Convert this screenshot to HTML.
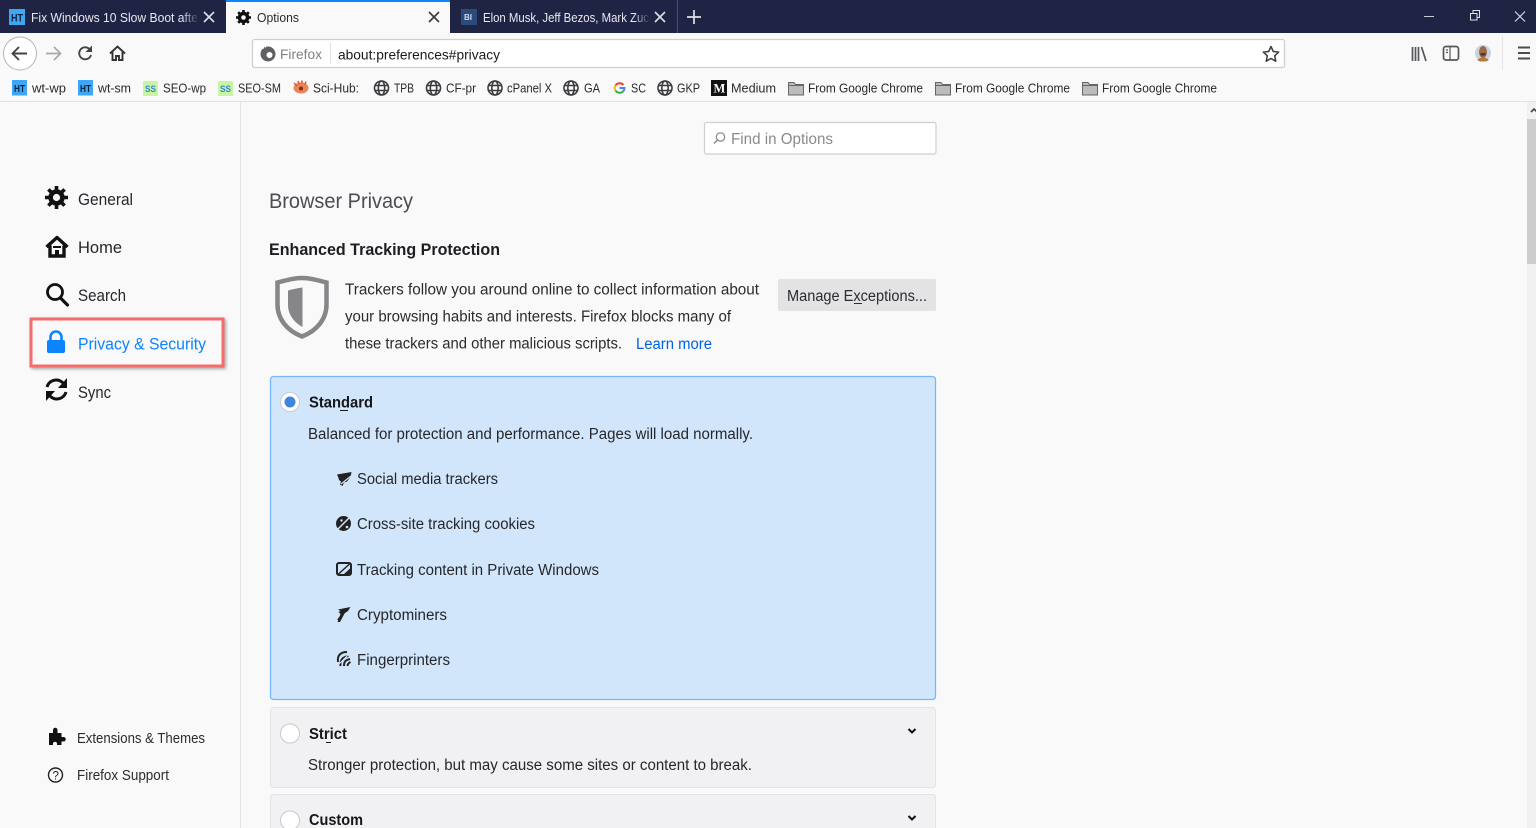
<!DOCTYPE html>
<html><head><meta charset="utf-8"><title>Options</title>
<style>
html,body{margin:0;padding:0;width:1536px;height:828px;overflow:hidden;background:#f9f9fa}
svg{display:block;position:absolute;left:0;top:0;filter:blur(.25px)}
text{font-family:"Liberation Sans",sans-serif;white-space:pre}
</style></head><body>
<svg width="1536" height="828" viewBox="0 0 1536 828" xmlns="http://www.w3.org/2000/svg">
<defs>
<linearGradient id="f1" x1="0" x2="1"><stop offset="0" stop-color="#1f2445" stop-opacity="0"/><stop offset="1" stop-color="#1f2445"/></linearGradient>
<filter id="sh" x="-10%" y="-20%" width="120%" height="140%"><feDropShadow dx="1.5" dy="1.5" stdDeviation="1.5" flood-color="#000" flood-opacity=".35"/></filter>
<g id="globe" fill="none" stroke="#3c3c40" stroke-width="1.600"><circle cx="0" cy="0" r="7"/><ellipse cx="0" cy="0" rx="3.200" ry="7"/><path d="M-6.600-2.500H6.600M-6.600 2.500H6.600"/></g>
<g id="folder"><path d="M.5 2.500h5.500l1.500 2h8v10.500h-15z" fill="#bcbcbc" stroke="#666"/><path d="M.5 5.500h15" stroke="#666"/></g>
<path id="x" d="M-5-5 5 5M5-5-5 5" fill="none" stroke-width="1.600"/>
</defs>

<rect width="1536" height="828" fill="#f9f9fa"/>

<!-- tab strip -->
<rect width="1536" height="33" fill="#1f2445"/>
<rect x="9" y="9" width="16" height="16" fill="#3fa5f5"/>
<text x="11" y="21.500" font-size="11" font-weight="bold" fill="#0e2038" textLength="12" lengthAdjust="spacingAndGlyphs">HT</text>
<text x="31" y="22" font-size="12.500" fill="#e8e9ee" textLength="167" lengthAdjust="spacingAndGlyphs">Fix Windows 10 Slow Boot afte</text>
<rect x="182" y="6" width="17" height="22" fill="url(#f1)"/>
<use href="#x" x="209" y="17" stroke="#dfe0e6"/>
<rect x="226" y="0" width="224" height="33" fill="#f9f9fa"/>
<rect x="226" y="0" width="224" height="2" fill="#0a84ff"/>
<g transform="translate(243.500 17.500)"><circle r="4.500" fill="none" stroke="#111" stroke-width="2.600"/><path d="M0-7.500V7.500M-7.500 0H7.500M-5.300-5.300 5.300 5.300M5.300-5.300-5.300 5.300" stroke="#111" stroke-width="2.600"/><circle r="2.300" fill="#f9f9fa"/></g>
<text x="257" y="22" font-size="12.500" fill="#2a2a2e" textLength="42" lengthAdjust="spacingAndGlyphs">Options</text>
<use href="#x" x="434" y="17" stroke="#38383d"/>
<rect x="461" y="9" width="16" height="16" fill="#2c4a7c"/>
<text x="464" y="20" font-size="8" font-weight="bold" fill="#cfdcf0">BI</text>
<text x="483" y="22" font-size="12.500" fill="#e8e9ee" textLength="166" lengthAdjust="spacingAndGlyphs">Elon Musk, Jeff Bezos, Mark Zuc</text>
<rect x="634" y="6" width="16" height="22" fill="url(#f1)"/>
<use href="#x" x="660" y="17" stroke="#dfe0e6"/>
<rect x="677" y="0" width="1" height="33" fill="#4a4e6c"/>
<path d="M694 10v14M687 17h14" stroke="#dfe0e6" stroke-width="1.700"/>
<path d="M1424 16.500h10" stroke="#c9cbd6"/>
<path d="M1470.500 13.500h6.500v6.500h-6.500zM1473 13v-2.500h6.500v7h-2.500" fill="none" stroke="#dfe0e6"/>
<path d="M1515 11.500l10 10M1525 11.500l-10 10" stroke="#dfe0e6" stroke-width="1.100"/>

<!-- nav toolbar -->
<circle cx="20" cy="53.500" r="16.500" fill="#fff" stroke="#b5b5b7"/>
<path d="M27 53.500H13M19 47l-6.500 6.500L19 60" fill="none" stroke="#444" stroke-width="1.900"/>
<path d="M46 53.500H60M54 47l6.500 6.500L54 60" fill="none" stroke="#a8a8ab" stroke-width="1.700"/>
<path d="M91 55a6 6 0 1 1-1.800-6.200L91 50.500" fill="none" stroke="#444" stroke-width="1.900"/><path d="M92 45.500v6.500h-6.500z" fill="#444"/>
<path d="M110 53.500l7.500-7 7.500 7M112.500 52v8h3.500v-4h3v4h3.500v-8" fill="none" stroke="#333" stroke-width="1.900"/>
<rect x="252.500" y="39.500" width="1032" height="28" rx="2" fill="#fff" stroke="#d0d0d2" stroke-width="1.300"/>
<circle cx="268" cy="54" r="7.500" fill="#606064"/><circle cx="269.500" cy="55" r="3" fill="#fff"/><path d="M260 47l5 3 1-3.500-3-1.500z" fill="#fff"/><path d="M264.500 46.500l-1.500 4 3-1z" fill="#606064"/>
<text x="280" y="59" font-size="14" fill="#808084" textLength="42" lengthAdjust="spacingAndGlyphs">Firefox</text>
<rect x="330" y="43" width="1" height="21" fill="#e0e0e2"/>
<text x="338" y="59.500" font-size="14" fill="#1a1a1e" textLength="162" lengthAdjust="spacingAndGlyphs">about:preferences#privacy</text>
<path d="M1271 46.500l2.300 5 5.400.6-4 3.700 1.100 5.400-4.800-2.700-4.800 2.700 1.100-5.400-4-3.700 5.400-.6z" fill="none" stroke="#3c3c40" stroke-width="1.500" stroke-linejoin="round"/>
<path d="M1412.500 47v14M1415.500 47v14M1418.500 47v14M1421.500 47l4.500 14" stroke="#55555a" stroke-width="1.700" fill="none"/>
<rect x="1443.500" y="46.500" width="15" height="13.500" rx="2.500" fill="none" stroke="#55555a" stroke-width="1.700"/><path d="M1450 47v13M1446 50h2M1446 52.500h2" stroke="#55555a" stroke-width="1.200"/>
<circle cx="1483" cy="53" r="8" fill="#c9d3dc"/><ellipse cx="1483" cy="52" rx="4" ry="6" fill="#9a6a4e"/><path d="M1477 60q6-5 12 0l-3 1.500h-6z" fill="#b57a3e"/><rect x="1480.500" y="53" width="5" height="2.500" fill="#5a3526"/>
<rect x="1502" y="36" width="1" height="34" fill="#e4e4e6"/>
<path d="M1518 47.500h12M1518 53h12M1518 58.500h12" stroke="#4a4a4f" stroke-width="2"/>

<!-- bookmarks -->
<rect x="0" y="101" width="1536" height="1" fill="#e1e1e3"/>
<rect x="12" y="80" width="15" height="15.500" fill="#3fa5f5"/><text x="14" y="92" font-size="10" font-weight="bold" fill="#0e2038" textLength="11" lengthAdjust="spacingAndGlyphs">HT</text>
<text x="32" y="92.500" font-size="12.500" fill="#2a2a2e" textLength="34" lengthAdjust="spacingAndGlyphs">wt-wp</text>
<rect x="78" y="80" width="15" height="15.500" fill="#3fa5f5"/><text x="80" y="92" font-size="10" font-weight="bold" fill="#0e2038" textLength="11" lengthAdjust="spacingAndGlyphs">HT</text>
<text x="98" y="92.500" font-size="12.500" fill="#2a2a2e" textLength="33" lengthAdjust="spacingAndGlyphs">wt-sm</text>
<rect x="143" y="81" width="15" height="15" fill="#c7f5a0"/><text x="145" y="92" font-size="9" font-weight="bold" fill="#3a86d0" textLength="11" lengthAdjust="spacingAndGlyphs">SS</text>
<text x="163" y="92.500" font-size="12.500" fill="#2a2a2e" textLength="43" lengthAdjust="spacingAndGlyphs">SEO-wp</text>
<rect x="218" y="81" width="15" height="15" fill="#c7f5a0"/><text x="220" y="92" font-size="9" font-weight="bold" fill="#3a86d0" textLength="11" lengthAdjust="spacingAndGlyphs">SS</text>
<text x="238" y="92.500" font-size="12.500" fill="#2a2a2e" textLength="43" lengthAdjust="spacingAndGlyphs">SEO-SM</text>
<ellipse cx="301" cy="88" rx="7.500" ry="5.500" fill="#e8855a"/><path d="M294 83l3 3M298 81l1 3M302 80.500v3M306 81.500l-1 3" stroke="#d9572f" stroke-width="1.500"/><circle cx="301" cy="88.500" r="2" fill="#8c2a14"/>
<text x="313" y="92.500" font-size="12.500" fill="#2a2a2e" textLength="46" lengthAdjust="spacingAndGlyphs">Sci-Hub:</text>
<use href="#globe" x="381.500" y="88"/><text x="394" y="92.500" font-size="12.500" fill="#2a2a2e" textLength="20" lengthAdjust="spacingAndGlyphs">TPB</text>
<use href="#globe" x="433.500" y="88"/><text x="446" y="92.500" font-size="12.500" fill="#2a2a2e" textLength="30" lengthAdjust="spacingAndGlyphs">CF-pr</text>
<use href="#globe" x="495" y="88"/><text x="507" y="92.500" font-size="12.500" fill="#2a2a2e" textLength="45" lengthAdjust="spacingAndGlyphs">cPanel X</text>
<use href="#globe" x="571" y="88"/><text x="584" y="92.500" font-size="12.500" fill="#2a2a2e" textLength="16" lengthAdjust="spacingAndGlyphs">GA</text>
<g fill="none" stroke-width="2"><path d="M623.500 85a5 5 0 0 0-8 .5" stroke="#ea4335"/><path d="M615.500 85.500a5 5 0 0 0 0 5" stroke="#fbbc05"/><path d="M615.500 90.500a5 5 0 0 0 8 .5" stroke="#34a853"/><path d="M623.500 91a5 5 0 0 0 1-3h-5" stroke="#4285f4"/></g>
<text x="631" y="92.500" font-size="12.500" fill="#2a2a2e" textLength="15" lengthAdjust="spacingAndGlyphs">SC</text>
<use href="#globe" x="665" y="88"/><text x="677" y="92.500" font-size="12.500" fill="#2a2a2e" textLength="23" lengthAdjust="spacingAndGlyphs">GKP</text>
<rect x="711" y="80" width="16" height="16" fill="#111"/><text x="713.500" y="92.500" font-size="12.500" font-weight="bold" fill="#fff" style="font-family:'Liberation Serif',serif">M</text>
<text x="731" y="92.500" font-size="12.500" fill="#2a2a2e" textLength="45" lengthAdjust="spacingAndGlyphs">Medium</text>
<use href="#folder" x="788" y="80"/><text x="808" y="92.500" font-size="12.500" fill="#2a2a2e" textLength="115" lengthAdjust="spacingAndGlyphs">From Google Chrome</text>
<use href="#folder" x="935" y="80"/><text x="955" y="92.500" font-size="12.500" fill="#2a2a2e" textLength="115" lengthAdjust="spacingAndGlyphs">From Google Chrome</text>
<use href="#folder" x="1082" y="80"/><text x="1102" y="92.500" font-size="12.500" fill="#2a2a2e" textLength="115" lengthAdjust="spacingAndGlyphs">From Google Chrome</text>

<!-- sidebar -->
<rect x="240" y="102" width="1" height="726" fill="#e3e3e5"/>
<g transform="translate(56.500 197.500)"><circle r="6.500" fill="none" stroke="#111" stroke-width="3.400"/><path d="M0-11.500V11.500M-11.500 0H11.500M-8.100-8.100 8.100 8.100M8.100-8.100-8.100 8.100" stroke="#111" stroke-width="3.600"/><circle r="3.600" fill="#f9f9fa"/></g>
<text x="78" y="205" font-size="17" fill="#26262b" textLength="55" lengthAdjust="spacingAndGlyphs">General</text>
<path d="M46.500 247l10.500-9.500 10.500 9.500" fill="none" stroke="#111" stroke-width="3.400" stroke-linejoin="round"/>
<path d="M50 245.500v10.500h14v-10.500" fill="none" stroke="#111" stroke-width="3.400"/><path d="M55 256v-6h4v6" fill="#111"/><path d="M53 246h8v2h-8z" fill="#111"/>
<text x="78" y="253" font-size="17" fill="#26262b" textLength="44" lengthAdjust="spacingAndGlyphs">Home</text>
<circle cx="55" cy="292" r="7.500" fill="none" stroke="#111" stroke-width="2.800"/><path d="M60.500 298l7 7" stroke="#111" stroke-width="3.200" stroke-linecap="round"/>
<text x="78" y="301" font-size="17" fill="#26262b" textLength="48" lengthAdjust="spacingAndGlyphs">Search</text>
<rect x="31" y="319" width="192" height="47" fill="#f9f9fa" stroke="#f56d6b" stroke-width="3" filter="url(#sh)"/>
<rect x="47" y="340" width="18" height="13" rx="2" fill="#0a84ff"/><path d="M50.500 341v-4a5.500 5.500 0 0 1 11 0v4" fill="none" stroke="#0a84ff" stroke-width="2.600"/>
<text x="78" y="349.500" font-size="17" fill="#0a84ff" textLength="128" lengthAdjust="spacingAndGlyphs">Privacy &amp; Security</text>
<g fill="none" stroke="#111" stroke-width="3"><path d="M47 387a9.500 9.500 0 0 1 15.500-4.500L65 385"/><path d="M66 392a9.500 9.500 0 0 1-15.500 4.500L48 394"/></g>
<path d="M67 378v10h-9zM46 401v-10h9z" fill="#111"/>
<text x="78" y="398" font-size="17" fill="#26262b" textLength="33" lengthAdjust="spacingAndGlyphs">Sync</text>
<path d="M49 733h4v-3a2.200 2.200 0 0 1 4.500 0v3h4v4h2a2 2 0 0 1 0 4.500h-2v3.500h-4.500v-2a2.200 2.200 0 0 0-4 0v2h-4z" fill="#111"/>
<text x="77" y="743" font-size="14.500" fill="#2c2c31" textLength="128" lengthAdjust="spacingAndGlyphs">Extensions &amp; Themes</text>
<circle cx="55.500" cy="775" r="7" fill="none" stroke="#222" stroke-width="1.400"/><text x="52.500" y="779.500" font-size="11.500" fill="#222">?</text>
<text x="77" y="780" font-size="14.500" fill="#2c2c31" textLength="92" lengthAdjust="spacingAndGlyphs">Firefox Support</text>

<!-- search -->
<rect x="704.500" y="122.500" width="231.500" height="31.500" rx="2" fill="#fff" stroke="#cfcfd1" stroke-width="1.200"/>
<circle cx="720.500" cy="137" r="4.200" fill="none" stroke="#85858a" stroke-width="1.200"/><path d="M717.500 140l-3.500 3.500" stroke="#85858a" stroke-width="1.300"/>
<text x="731" y="144" font-size="15.500" fill="#8a8a90" textLength="102" lengthAdjust="spacingAndGlyphs">Find in Options</text>

<!-- headings -->
<text x="269" y="208" font-size="21" fill="#4c4c52" textLength="144" lengthAdjust="spacingAndGlyphs">Browser Privacy</text>
<text x="269" y="255" font-size="17" font-weight="bold" fill="#1d1d22" textLength="231" lengthAdjust="spacingAndGlyphs">Enhanced Tracking Protection</text>

<!-- shield -->
<path d="M302 278c8 0 15 2 24.500 4.500v22c0 14-9 26-24.500 32-15.500-6-24.500-18-24.500-32v-22c9.500-2.500 16.500-4.500 24.500-4.500z" fill="none" stroke="#868689" stroke-width="4.500"/>
<path d="M302.500 287.500v39.500c-9-5-14.500-13-14.500-22v-14.500c5-1.300 9.500-2.500 14.500-3z" fill="#868689"/>

<!-- intro -->
<g font-size="15.500" fill="#2b2b30">
<text x="345" y="294.500" textLength="414" lengthAdjust="spacingAndGlyphs">Trackers follow you around online to collect information about</text>
<text x="345" y="321.500" textLength="386" lengthAdjust="spacingAndGlyphs">your browsing habits and interests. Firefox blocks many of</text>
<text x="345" y="348.500" textLength="277" lengthAdjust="spacingAndGlyphs">these trackers and other malicious scripts.</text>
<text x="636" y="349" textLength="76" lengthAdjust="spacingAndGlyphs" fill="#0060df">Learn more</text>
</g>
<rect x="778" y="279" width="158" height="32" rx="2" fill="#e3e3e5"/>
<text x="787" y="301" font-size="15.500" fill="#2b2b30" textLength="140" lengthAdjust="spacingAndGlyphs">Manage Exceptions...</text>
<rect x="854" y="303" width="8" height="1" fill="#2b2b30"/>

<!-- standard -->
<rect x="270.500" y="376.500" width="665" height="323" rx="3" fill="#d1e6fb" stroke="#78b8f8" stroke-width="1.300"/>
<circle cx="290" cy="402" r="9.500" fill="#fff" stroke="#c6cdd5"/><circle cx="290" cy="402" r="5.500" fill="#3a87dc"/>
<text x="309" y="407.500" font-size="15.500" font-weight="bold" fill="#15151a" textLength="64" lengthAdjust="spacingAndGlyphs">Standard</text>
<rect x="340" y="410" width="8" height="1" fill="#15151a"/>
<text x="308" y="439" font-size="15.500" fill="#26262b" textLength="445" lengthAdjust="spacingAndGlyphs">Balanced for protection and performance. Pages will load normally.</text>
<g font-size="15.500" fill="#26262b">
<text x="357" y="484" textLength="141" lengthAdjust="spacingAndGlyphs">Social media trackers</text>
<text x="357" y="529" textLength="178" lengthAdjust="spacingAndGlyphs">Cross-site tracking cookies</text>
<text x="357" y="575" textLength="242" lengthAdjust="spacingAndGlyphs">Tracking content in Private Windows</text>
<text x="357" y="620" textLength="90" lengthAdjust="spacingAndGlyphs">Cryptominers</text>
<text x="357" y="665" textLength="93" lengthAdjust="spacingAndGlyphs">Fingerprinters</text>
</g>
<!-- tracker icons -->
<path d="M337 474.500l14.500-2.500-1 5-3.500 4.500-3 1-1.500 3.500-2.500-1.500 1-3-2-1.500-.5-2z" fill="#222"/><path d="M341 484l10-8" stroke="#d1e6fb" stroke-width="1.200"/>
<circle cx="343.500" cy="523.500" r="7.500" fill="#222"/><path d="M336.500 530.500l14-14" stroke="#d1e6fb" stroke-width="1.500"/><circle cx="341.500" cy="520.500" r="1.200" fill="#d1e6fb"/><circle cx="347" cy="527" r="1.300" fill="#d1e6fb"/>
<rect x="337" y="563" width="14" height="12" rx="2" fill="none" stroke="#222" stroke-width="2"/><path d="M338.500 574l11-10" stroke="#222" stroke-width="1.500"/><path d="M344 574l6-5.500v5.500z" fill="#222"/>
<path d="M338 609.500l12.500-2.500-2.500 4-3 2-1 1.500-4 7.500h-2.500l3-8-2-2 2-1z" fill="#222"/><path d="M338 620l5-6" stroke="#222" stroke-width="2"/>
<g fill="none" stroke="#222" stroke-width="2"><path d="M338 662c-1-7 3-10 9-10M340.500 666c-.5-5 1-9 8-10M344 666c0-4 1-6 6-7M347.500 666c0-2 1-3 3-4"/></g><path d="M337 666l14-14" stroke="#d1e6fb" stroke-width="1"/>

<!-- strict -->
<rect x="270.500" y="707.500" width="665" height="80" rx="3" fill="#f1f1f3" stroke="#e3e3e5"/>
<circle cx="290" cy="733.500" r="9.500" fill="#fff" stroke="#c9c9cc"/>
<text x="309" y="739" font-size="15.500" font-weight="bold" fill="#15151a" textLength="38" lengthAdjust="spacingAndGlyphs">Strict</text>
<rect x="326" y="742" width="5" height="1" fill="#15151a"/>
<path d="M908.500 729l3.500 3.500 3.500-3.500" fill="none" stroke="#111" stroke-width="2"/>
<text x="308" y="770" font-size="15.500" fill="#26262b" textLength="444" lengthAdjust="spacingAndGlyphs">Stronger protection, but may cause some sites or content to break.</text>

<!-- custom -->
<rect x="270.500" y="794.500" width="665" height="50" rx="3" fill="#f1f1f3" stroke="#e3e3e5"/>
<circle cx="290" cy="820.500" r="9.500" fill="#fff" stroke="#c9c9cc"/>
<text x="309" y="825" font-size="15.500" font-weight="bold" fill="#15151a" textLength="54" lengthAdjust="spacingAndGlyphs">Custom</text>
<rect x="309" y="828" width="10" height="1" fill="#15151a"/>
<path d="M908.500 816l3.500 3.500 3.500-3.500" fill="none" stroke="#111" stroke-width="2"/>

<!-- scrollbar -->
<rect x="1527" y="102" width="9" height="726" fill="#f1f1f1"/>
<path d="M1531 112l3-3 3 3" fill="none" stroke="#444" stroke-width="1.600"/>
<rect x="1527" y="119" width="9" height="145" fill="#cdcdcd"/>
</svg>
</body></html>
